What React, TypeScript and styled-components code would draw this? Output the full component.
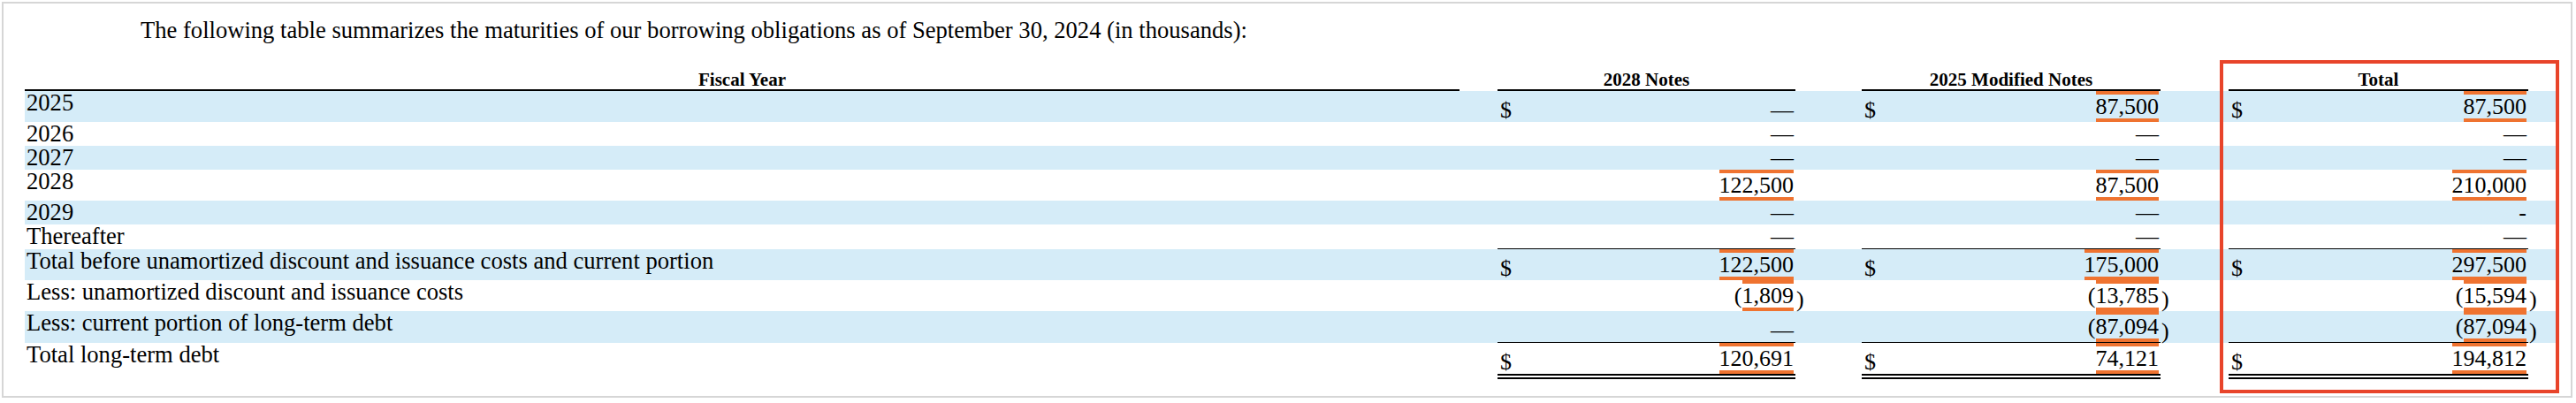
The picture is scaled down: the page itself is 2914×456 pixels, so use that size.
import React from 'react';
import styled, { createGlobalStyle } from 'styled-components';

const COLS = '1623px 43px 337px 14px 61px 338px 14px 63px 339px 31px';
const ORANGE = '#ef7330';
const SHADE = '#d5ecf8';

const GlobalStyle = createGlobalStyle`
  html, body {
    margin: 0;
    padding: 0;
    background: #fff;
  }
  body {
    font-family: "Liberation Serif", "Times New Roman", serif;
    color: #000;
  }
`;

const Frame = styled.div`
  position: relative;
  box-sizing: border-box;
  width: 2908px;
  height: 448px;
  margin: 2px 0 0 2px;
  border: 2px solid #d6d6d6;
  padding: 15px 17px 0 24px;
`;

const Intro = styled.p`
  margin: 0;
  padding-left: 131px;
  font-size: 26.6px;
  line-height: 30px;
`;

const Table = styled.div`
  margin-top: 30px;
`;

const HeadRow = styled.div`
  display: grid;
  grid-template-columns: ${COLS};
  font-size: 21px;
  font-weight: 700;
  line-height: 22px;
`;

const HeadCell = styled.div<{ $col: number }>`
  grid-column: ${(p) => p.$col};
  text-align: center;
  border-bottom: 2px solid #000;
  white-space: nowrap;
`;

const Row = styled.div<{ $shaded?: boolean }>`
  display: grid;
  grid-template-columns: ${COLS};
  background: ${(p) => (p.$shaded ? SHADE : 'transparent')};
  font-size: 26px;
  line-height: 27px;
`;

const Label = styled.div`
  grid-column: 1;
  align-self: start;
  padding-left: 2px;
  font-size: 26.6px;
  white-space: nowrap;
`;

type Rule = 'single' | 'double' | undefined;

const ruleCss = (rule: Rule) => {
  if (rule === 'single') return 'border-bottom: 1px solid #000;';
  if (rule === 'double') return 'border-bottom: 6px double #000;';
  return '';
};

const Group = styled.div<{ $col: number; $rule?: Rule }>`
  grid-column: ${(p) => p.$col};
  display: flex;
  align-items: flex-end;
  justify-content: space-between;
  padding: 0 2px 0 3px;
  ${(p) => ruleCss(p.$rule)}
`;

const Dollar = styled.span`
  white-space: nowrap;
`;

const Amount = styled.span`
  margin-left: auto;
  white-space: nowrap;
`;

const Num = styled.span<{ $hi?: boolean }>`
  display: inline-block;
  ${(p) =>
    p.$hi
      ? `border-top: 4px solid ${ORANGE}; border-bottom: 4px solid ${ORANGE};`
      : ''}
`;

const Paren = styled.div<{ $col: number }>`
  grid-column: ${(p) => p.$col};
  align-self: end;
  padding-left: 1px;
`;

const Highlight = styled.div`
  position: absolute;
  left: 2507px;
  top: 64px;
  width: 384px;
  height: 377px;
  box-sizing: border-box;
  border: 4px solid #e8442a;
  pointer-events: none;
`;

type Cell = { v: string; d?: boolean; hi?: boolean; neg?: boolean };
type Line = { label: string; shaded?: boolean; rule?: Rule; cells: Cell[] };

const dash: Cell = { v: '—' };

const rows: Line[] = [
  {
    label: '2025',
    shaded: true,
    cells: [
      { v: '—', d: true },
      { v: '87,500', d: true, hi: true },
      { v: '87,500', d: true, hi: true },
    ],
  },
  { label: '2026', cells: [dash, dash, dash] },
  { label: '2027', shaded: true, cells: [dash, dash, dash] },
  {
    label: '2028',
    cells: [
      { v: '122,500', hi: true },
      { v: '87,500', hi: true },
      { v: '210,000', hi: true },
    ],
  },
  { label: '2029', shaded: true, cells: [dash, dash, { v: '-' }] },
  { label: 'Thereafter', rule: 'single', cells: [dash, dash, dash] },
  {
    label: 'Total before unamortized discount and issuance costs and current portion',
    shaded: true,
    cells: [
      { v: '122,500', d: true, hi: true },
      { v: '175,000', d: true, hi: true },
      { v: '297,500', d: true, hi: true },
    ],
  },
  {
    label: 'Less: unamortized discount and issuance costs',
    cells: [
      { v: '1,809', hi: true, neg: true },
      { v: '13,785', hi: true, neg: true },
      { v: '15,594', hi: true, neg: true },
    ],
  },
  {
    label: 'Less: current portion of long-term debt',
    shaded: true,
    rule: 'single',
    cells: [
      dash,
      { v: '87,094', hi: true, neg: true },
      { v: '87,094', hi: true, neg: true },
    ],
  },
  {
    label: 'Total long-term debt',
    rule: 'double',
    cells: [
      { v: '120,691', d: true, hi: true },
      { v: '74,121', d: true, hi: true },
      { v: '194,812', d: true, hi: true },
    ],
  },
];

const groupCols = [3, 6, 9];

function DataRow({ line }: { line: Line }) {
  return (
    <Row $shaded={line.shaded}>
      <Label>{line.label}</Label>
      {line.cells.map((cell, i) => (
        <React.Fragment key={groupCols[i]}>
          <Group $col={groupCols[i]} $rule={line.rule}>
            {cell.d && <Dollar>$</Dollar>}
            <Amount>
              {cell.neg && '('}
              <Num $hi={cell.hi}>{cell.v}</Num>
            </Amount>
          </Group>
          <Paren $col={groupCols[i] + 1}>{cell.neg ? ')' : ''}</Paren>
        </React.Fragment>
      ))}
    </Row>
  );
}

export default function App() {
  return (
    <>
      <GlobalStyle />
      <Frame>
        <Intro>
          The following table summarizes the maturities of our borrowing obligations as of
          September 30, 2024 (in thousands):
        </Intro>
        <Table>
          <HeadRow>
            <HeadCell $col={1}>Fiscal Year</HeadCell>
            <HeadCell $col={3}>2028 Notes</HeadCell>
            <HeadCell $col={6}>2025 Modified Notes</HeadCell>
            <HeadCell $col={9}>Total</HeadCell>
          </HeadRow>
          {rows.map((line) => (
            <DataRow key={line.label} line={line} />
          ))}
        </Table>
        <Highlight />
      </Frame>
    </>
  );
}
